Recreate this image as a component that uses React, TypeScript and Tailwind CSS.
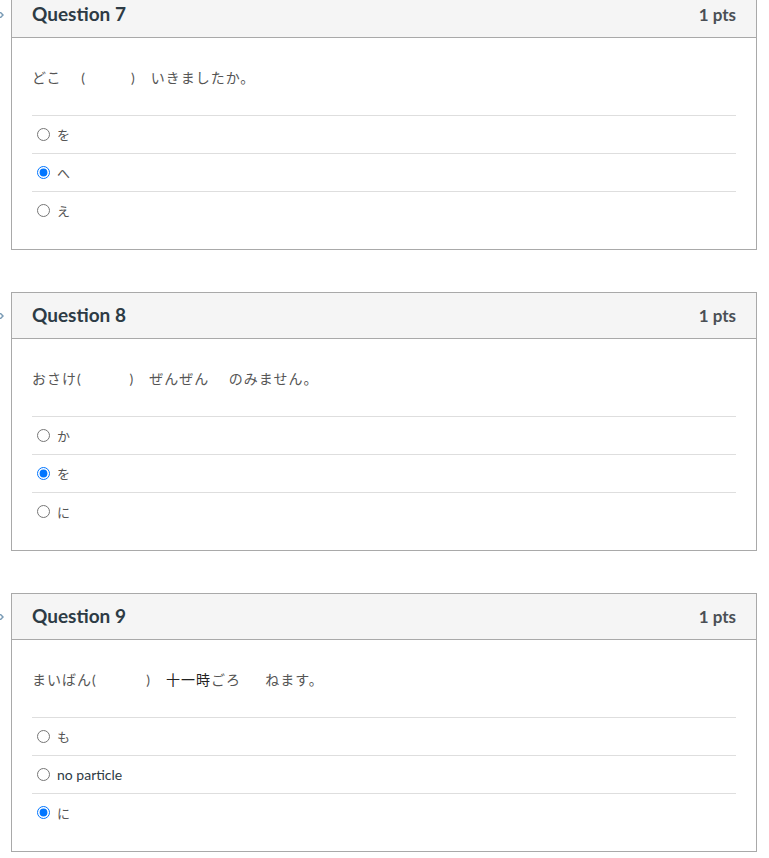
import React from "react";

type Answer = {
  label: string;
  checked?: boolean;
  latin?: boolean;
};

type Question = {
  id: number;
  text: React.ReactNode;
  answers: Answer[];
};

const questions: Question[] = [
  {
    id: 7,
    text: "どこ　 (　　　)　いきましたか。",
    answers: [{ label: "を" }, { label: "へ", checked: true }, { label: "え" }],
  },
  {
    id: 8,
    text: "おさけ(　　　\u2009)　ぜんぜん　 のみません。",
    answers: [{ label: "か" }, { label: "を", checked: true }, { label: "に" }],
  },
  {
    id: 9,
    text: (
      <>
        まいばん(　　　 )　<span className="text-[#222]">十一時</span>ごろ　  ねます。
      </>
    ),
    answers: [
      { label: "も" },
      { label: "no particle", latin: true },
      { label: "に", checked: true },
    ],
  },
];

const QuestionCard = ({ q }: { q: Question }) => {
  return (
    <div className="flex">
      <div className="w-[11px] shrink-0 pt-[21px]">
        <svg width="4" height="6" viewBox="0 0 4 6" className="block">
          <path d="M0 0 L3 3 L0 6" fill="none" stroke="#7a9bb5" strokeWidth="1.5" />
        </svg>
      </div>
      <div className="w-[746px] border border-[#a9a9a9] bg-white">
        <div className="h-[46px] flex items-center justify-between px-5 bg-[#f5f5f5] border-b border-[#a9a9a9]">
          <h2 className="text-[19px] font-bold text-[#2d3b45] font-['Lato',sans-serif]">
            Question {q.id}
          </h2>
          <span className="text-[17px] font-bold text-[#4a4f55] font-['Lato',sans-serif]">
            1 pts
          </span>
        </div>
        <div className="px-5 pt-[30px] pb-5">
          <p className="h-5 leading-5 text-[14px] tracking-[1px] text-[#555] whitespace-pre font-['Lato','Noto_Sans_CJK_JP',sans-serif]">
            {q.text}
          </p>
          <div className="mt-[27px]">
            {q.answers.map((a, i) => (
              <label
                key={i}
                className="h-[38px] flex items-center border-t border-[#dedede]"
              >
                <input
                  type="radio"
                  name={`q${q.id}`}
                  defaultChecked={a.checked}
                  className="w-[13px] h-[13px] ml-[5px] mr-[3px] accent-[#0075ff]"
                />
                <span
                  className={
                    a.latin
                      ? "ml-1 text-[14px] text-[#2d3b45] font-['Lato',sans-serif]"
                      : "ml-1 text-[13px] text-[#555] font-['Noto_Sans_CJK_JP',sans-serif]"
                  }
                >
                  {a.label}
                </span>
              </label>
            ))}
          </div>
        </div>
      </div>
    </div>
  );
};

export default function App() {
  return (
    <div className="min-h-screen bg-white">
      <div className="flex flex-col gap-[42px] -mt-[9px] pb-10">
        {questions.map((q) => (
          <QuestionCard key={q.id} q={q} />
        ))}
      </div>
    </div>
  );
}
